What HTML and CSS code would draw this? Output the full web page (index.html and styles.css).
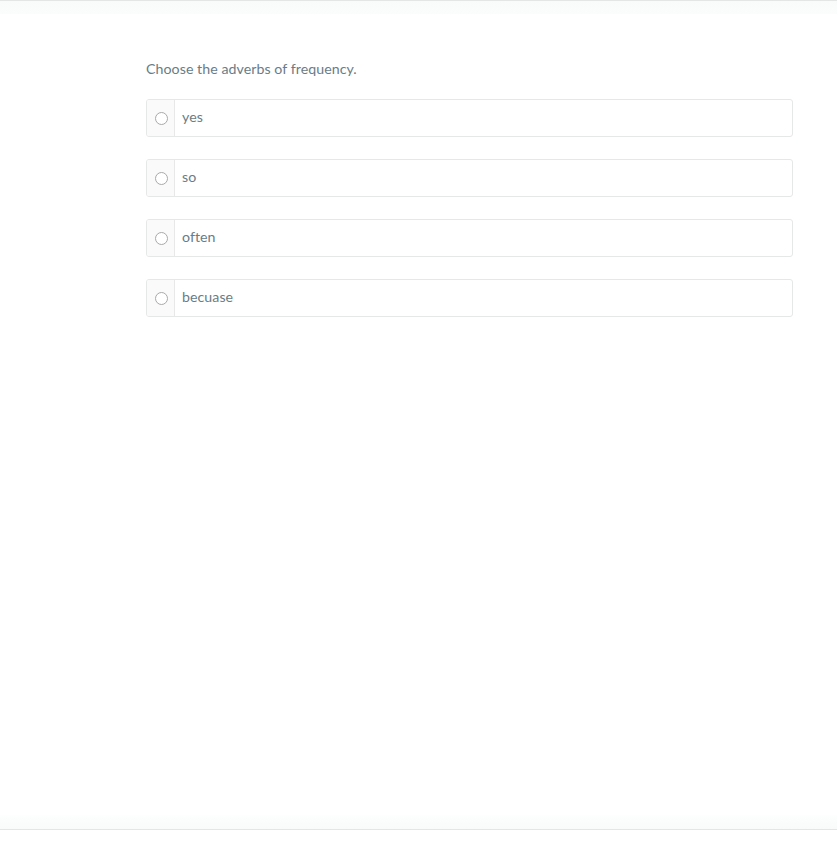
FILE: index.html
```html
<!DOCTYPE html>
<html>
<head>
<meta charset="utf-8">
<link rel="stylesheet" href="styles.css">
</head>
<body>
<div class="page">
  <div class="top-band"></div>
  <main class="content">
    <p class="question">Choose the adverbs of frequency.</p>
    <div class="options">
      <label class="option"><span class="addon"><span class="radio"></span></span><span class="label">yes</span></label>
      <label class="option"><span class="addon"><span class="radio"></span></span><span class="label">so</span></label>
      <label class="option"><span class="addon"><span class="radio"></span></span><span class="label">often</span></label>
      <label class="option"><span class="addon"><span class="radio"></span></span><span class="label">becuase</span></label>
    </div>
  </main>
  <div class="bottom-band"></div>
</div>
</body>
</html>
```
FILE: styles.css
```css
html, body {
  margin: 0;
  padding: 0;
  background: #ffffff;
}
body {
  font-family: Lato, "Open Sans", sans-serif;
  color: #6a7c85;
}
.page {
  height: 862px;
  display: flex;
  flex-direction: column;
}
.top-band {
  height: 13px;
  border-top: 1px solid #e4e6e5;
  background: linear-gradient(#f9fbfa, #fbfcfc);
}
.content {
  flex: 1;
  padding: 46px 44px 0 146px;
}
.question {
  margin: 0 0 22px;
  font-size: 14.2px;
  letter-spacing: 0.05px;
  line-height: 17px;
}
.options {
  display: flex;
  flex-direction: column;
  gap: 22px;
}
.option {
  display: flex;
  height: 38px;
  box-sizing: border-box;
  border: 1px solid #e6e7e7;
  border-radius: 3px;
  overflow: hidden;
}
.addon {
  width: 27px;
  flex: none;
  background: #fafafa;
  border-right: 1px solid #e8e8e8;
  display: flex;
  align-items: center;
  justify-content: center;
}
.radio {
  width: 11px;
  height: 11px;
  border: 1px solid #a9a9a9;
  border-radius: 50%;
  background: #fff;
  margin-left: 1px;
}
.label {
  display: flex;
  align-items: center;
  padding-left: 7px;
  font-size: 14.2px;
  letter-spacing: 0.05px;
  padding-bottom: 4px;
}
.bottom-band {
  height: 14px;
  margin-bottom: 32px;
  border-bottom: 1px solid #e4e6e5;
  background: linear-gradient(#fdfefe, #f8fbfa);
}
```
